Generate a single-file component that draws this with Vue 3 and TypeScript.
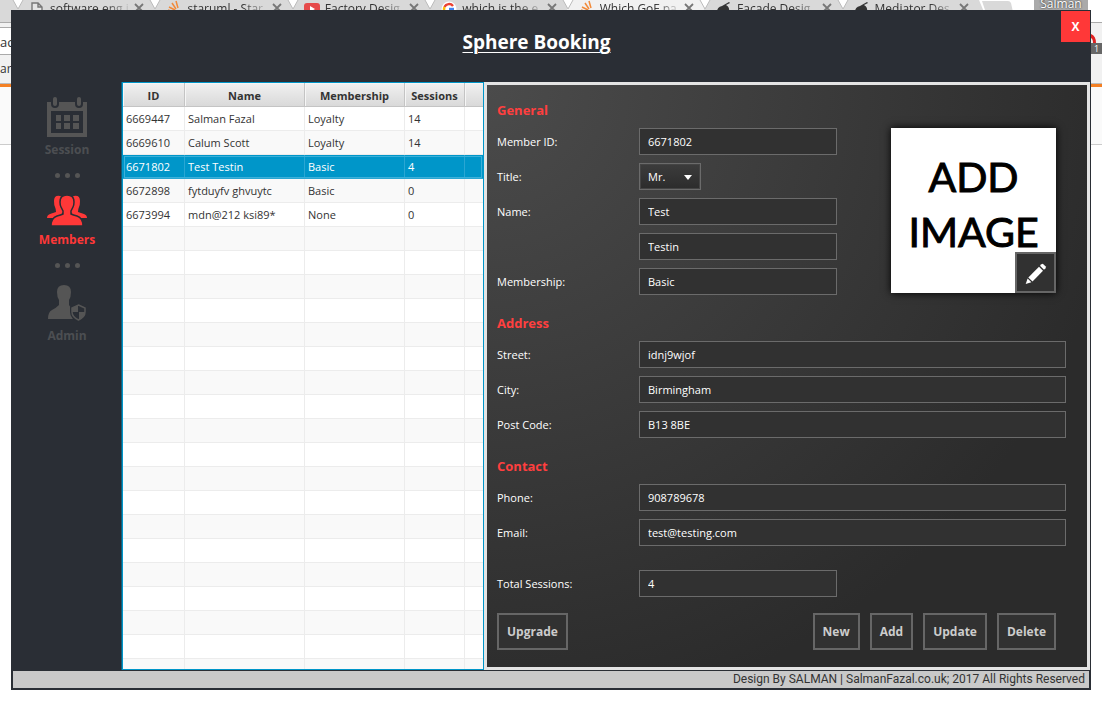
<script setup lang="ts">
import { computed, ref } from 'vue'

interface Member {
  id: string
  name: string
  membership: string
  sessions: number
}

interface BrowserTab {
  title: string
  icon: 'page' | 'stack' | 'video' | 'google' | 'bird'
  active?: boolean
}

const members: Member[] = [
  { id: '6669447', name: 'Salman Fazal', membership: 'Loyalty', sessions: 14 },
  { id: '6669610', name: 'Calum Scott', membership: 'Loyalty', sessions: 14 },
  { id: '6671802', name: 'Test Testin', membership: 'Basic', sessions: 4 },
  { id: '6672898', name: 'fytduyfv ghvuytc', membership: 'Basic', sessions: 0 },
  { id: '6673994', name: 'mdn@212 ksi89*', membership: 'None', sessions: 0 },
]

const tabs: BrowserTab[] = [
  { title: 'software eng i', icon: 'page' },
  { title: 'staruml - Star', icon: 'stack' },
  { title: 'Factory Desig', icon: 'video' },
  { title: 'which is the e', icon: 'google' },
  { title: 'Which GoF pa', icon: 'stack', active: true },
  { title: 'Facade Desig', icon: 'bird' },
  { title: 'Mediator Des', icon: 'bird' },
]

const MIN_ROWS = 24
const selectedId = ref('6671802')
const fillerRows = computed(() => Math.max(0, MIN_ROWS - members.length))

const form = ref({
  id: '6671802',
  title: 'Mr.',
  first: 'Test',
  last: 'Testin',
  membership: 'Basic',
  street: 'idnj9wjof',
  city: 'Birmingham',
  postCode: 'B13 8BE',
  phone: '908789678',
  email: 'test@testing.com',
  total: '4',
})
</script>

<template>
  <div class="desktop">
    <div class="browser" aria-hidden="true">
      <div class="tab-strip">
        <div class="tabs">
          <div v-for="tab in tabs" :key="tab.title" class="tab" :class="{ active: tab.active }">
            <svg class="tab-edge" viewBox="0 0 12 12"><path d="M1 0H11L6 9Z" fill="#fff" /><path d="M1 0L6 9L11 0" fill="none" stroke="#bbb" /></svg>
            <svg class="favicon" viewBox="0 0 16 16">
              <path v-if="tab.icon === 'page'" d="M3 3H9L13 7V16H3ZM9 3V7H13" fill="#e4e4e4" stroke="#777" stroke-width="1.4" />
              <path v-else-if="tab.icon === 'stack'" d="M2 10L8 12M3 7L9 10M6 3L10 9M10 1L12 8M3 14H9" fill="none" stroke="#f28a3a" stroke-width="1.5" />
              <template v-else-if="tab.icon === 'video'">
                <rect y="3" width="16" height="13" rx="3" fill="#e64b4b" />
                <path d="M6 6L11 9L6 12Z" fill="#fff" />
              </template>
              <template v-else-if="tab.icon === 'google'">
                <circle cx="8" cy="9" r="7.5" fill="#fff" />
                <path d="M3.5 7A5 5 0 0 1 12 6" fill="none" stroke="#ea4335" stroke-width="2.4" />
                <path d="M3.5 7A5 5 0 0 0 4 12" fill="none" stroke="#fbbc05" stroke-width="2.4" />
                <path d="M8 9H13" stroke="#4285f4" stroke-width="2.4" />
              </template>
              <path v-else d="M13 2L14 3L10 5Q14 7 13 12H8L7 10L6 12H1Q1 7 6 6Z" fill="#333" />
            </svg>
            <span class="tab-title">{{ tab.title }}</span>
            <svg class="tab-close" viewBox="0 0 10 10"><path d="M1 1L9 9M9 1L1 9" stroke="#777" stroke-width="1.8" /></svg>
          </div>
        </div>
        <svg class="tab-end" viewBox="0 0 34 12"><path d="M0 0L5 12H0ZM3 1H29Q31 1 32 3L34 12H9Q7 12 6 10Z" fill="#d9d9d9" /></svg>
        <span class="profile">Salman</span>
      </div>
      <div class="toolbar">
        <span class="address">ac</span>
        <span class="extension">
          <svg viewBox="0 0 11 10"><path d="M0 1Q5 3 5 10H2Q2 6 0 5Z" fill="#e02020" /></svg>
          <span class="badge">1</span>
        </span>
      </div>
      <div class="bookmarks">ark</div>
      <div class="site-line"></div>
      <div class="site-head"></div>
    </div>

    <main class="window">
      <header class="title-bar">
        <h1>Sphere Booking</h1>
        <button type="button" class="close" aria-label="Close">X</button>
      </header>

      <div class="body">
        <nav class="sidebar">
          <button type="button" class="nav-item">
            <svg width="40" height="40" viewBox="0 0 40 40" fill="currentColor">
              <path fill-rule="evenodd" d="M0 5H4V7Q4 11 8 11T12 7V5H28V7Q28 11 32 11T36 7V5H40V40H0ZM4 14V36H36V14Z" />
              <rect x="6" y="0" width="4" height="9" rx="2" />
              <rect x="30" y="0" width="4" height="9" rx="2" />
              <path d="M9 18H14V24H9ZM17 18H23V24H17ZM26 18H32V24H26ZM9 26H14V32H9ZM17 26H23V32H17ZM26 26H32V32H26Z" />
            </svg>
            <span>Session</span>
          </button>
          <span class="dots"><i></i><i></i><i></i></span>
          <button type="button" class="nav-item current">
            <svg width="40" height="31" viewBox="0 0 40 31" fill="currentColor">
              <path d="M13 1Q7 0 7 6Q7 10 8 12Q9 14 9 17L3 19Q0 20 0 23H12L18 14V3Z" />
              <path d="M27 1Q33 0 33 6Q33 10 32 12Q31 14 31 17L37 19Q40 20 40 23H28L22 14V3Z" />
              <path d="M20 0Q27 0 27 7Q27 10 26 12Q25 14 24 16V19Q26 20 30 21Q36 23 36 31H4Q4 23 10 21Q14 20 16 19V16Q15 14 14 12Q13 10 13 7Q13 0 20 0Z" stroke="#2a2e35" stroke-width="1.5" />
            </svg>
            <span>Members</span>
          </button>
          <span class="dots"><i></i><i></i><i></i></span>
          <button type="button" class="nav-item admin">
            <svg width="40" height="38" viewBox="0 0 40 38" fill="currentColor">
              <path d="M17 0Q24 0 24 7Q24 12 22 15V20Q24 22 24 25Q24 31 26 34H1Q1 27 5 25Q9 23 12 20V15Q10 12 10 7Q10 0 17 0Z" />
              <path d="M31 19L39 22V27Q39 33 31 37Q23 33 23 27V22Z" fill="#2a2e35" />
              <path d="M31.5 20L38 23V27Q38 32 31.5 35Q25 32 25 27V23Z" fill="none" stroke="currentColor" stroke-width="1.5" />
              <path d="M31 20V27H25V23ZM32 27H38Q38 32 32 35Z" />
            </svg>
            <span>Admin</span>
          </button>
        </nav>

        <section class="table-pane" aria-label="Member list">
          <table>
            <colgroup>
              <col class="c-id" /><col class="c-name" /><col class="c-membership" /><col class="c-sessions" /><col />
            </colgroup>
            <thead>
              <tr><th>ID</th><th>Name</th><th>Membership</th><th>Sessions</th><th></th></tr>
            </thead>
            <tbody>
              <tr v-for="m in members" :key="m.id" :class="{ selected: m.id === selectedId }" @click="selectedId = m.id">
                <td>{{ m.id }}</td><td>{{ m.name }}</td><td>{{ m.membership }}</td><td>{{ m.sessions }}</td><td></td>
              </tr>
              <tr v-for="n in fillerRows" :key="n"><td></td><td></td><td></td><td></td><td></td></tr>
            </tbody>
          </table>
        </section>

        <form class="details" @submit.prevent>
          <div class="general">
            <fieldset class="fields">
              <h2>General</h2>
              <label for="member-id">Member ID:</label>
              <input id="member-id" v-model="form.id" class="short" type="text" />
              <label for="title">Title:</label>
              <span class="select">
                <select id="title" v-model="form.title">
                  <option>Mr.</option>
                  <option>Mrs.</option>
                  <option>Miss</option>
                </select>
                <svg viewBox="0 0 8 5"><path d="M0 0H8L4 5Z" fill="#fff" /></svg>
              </span>
              <label for="first-name">Name:</label>
              <input id="first-name" v-model="form.first" class="short" type="text" />
              <span></span>
              <input id="last-name" v-model="form.last" class="short" type="text" aria-label="Last name" />
              <label for="membership">Membership:</label>
              <input id="membership" v-model="form.membership" class="short" type="text" />
            </fieldset>
            <div class="photo">
              <span>ADD<br />IMAGE</span>
              <button type="button" aria-label="Edit image">
                <svg width="24" height="24" viewBox="0 0 24 24" fill="#fff">
                  <path d="M15 5.7L19 9.7L8.5 20.5L4.3 16.5Z" />
                  <path d="M3.6 17.5L7.4 21.3L1.7 23Z" />
                  <path d="M16 4.7L17.5 3.2Q18.5 2.4 19.6 3.4L21.5 5.3Q22.3 6.3 21.5 7.2L20 8.7Z" />
                </svg>
              </button>
            </div>
          </div>

          <fieldset class="fields">
            <h2>Address</h2>
            <label for="street">Street:</label>
            <input id="street" v-model="form.street" type="text" />
            <label for="city">City:</label>
            <input id="city" v-model="form.city" type="text" />
            <label for="post-code">Post Code:</label>
            <input id="post-code" v-model="form.postCode" type="text" />
          </fieldset>

          <fieldset class="fields">
            <h2>Contact</h2>
            <label for="phone">Phone:</label>
            <input id="phone" v-model="form.phone" type="text" />
            <label for="email">Email:</label>
            <input id="email" v-model="form.email" type="text" />
          </fieldset>

          <div class="fields total">
            <label for="total">Total Sessions:</label>
            <input id="total" v-model="form.total" class="short" type="text" />
          </div>

          <div class="actions">
            <button type="button" class="upgrade">Upgrade</button>
            <button type="button">New</button>
            <button type="button">Add</button>
            <button type="button">Update</button>
            <button type="button">Delete</button>
          </div>
        </form>
      </div>

      <footer>Design By SALMAN | SalmanFazal.co.uk; 2017 All Rights Reserved</footer>
    </main>
  </div>
</template>

<style>
body {
  margin: 0;
  background: #fff;
}
</style>

<style scoped>
* {
  box-sizing: border-box;
}

.desktop {
  position: relative;
  display: flex;
  min-height: 100vh;
  padding: 10px 11px 12px;
  overflow: hidden;
  font-family: "Open Sans", "Noto Sans", sans-serif;
  font-size: 11px;
  line-height: 16px;
}

/* Browser behind the window */
.browser {
  position: absolute;
  inset: 0;
  color: #333;
}

.tab-strip {
  display: flex;
  height: 23px;
  border-bottom: 1px solid #aaa;
  background: linear-gradient(90deg, #d9d9d9 17px, #fff 17px);
}

.tabs {
  display: flex;
  flex: 1;
  min-width: 0;
  margin-left: 17px;
}

.tab {
  position: relative;
  display: flex;
  flex: 1;
  min-width: 0;
  padding-left: 12px;
  background: #d9d9d9;
}

.tab.active {
  background: #f1f1f1;
}

.tab-edge {
  position: absolute;
  left: -5px;
  top: 0;
  width: 12px;
  height: 12px;
}

.favicon {
  flex: none;
  width: 16px;
  height: 16px;
  margin-right: 5px;
}

.tab-title {
  flex: 1;
  min-width: 0;
  font-size: 12px;
  line-height: 18px;
  white-space: nowrap;
  mask-image: linear-gradient(90deg, #000 70%, transparent 105%);
}

.tab-close {
  flex: none;
  width: 10px;
  height: 10px;
  margin: 3px 10px 0 6px;
}

.tab-end {
  flex: none;
  width: 34px;
  height: 12px;
  margin-right: 21px;
}

.profile {
  flex: none;
  width: 54px;
  height: 22px;
  margin: -4px 14px 0 0;
  background: #aaa;
  color: #fff;
  font-size: 12px;
  text-align: center;
  text-shadow: 0 0 2px #000;
}

.toolbar {
  display: flex;
  justify-content: space-between;
  height: 33px;
  padding-top: 4px;
  background: #f1f1f1;
}

.address {
  width: 50%;
  height: 28px;
  border: 1px solid #aaa;
  border-left: 0;
  background: #fff;
  font-size: 13px;
  line-height: 28px;
}

.extension {
  width: 11px;
  padding-top: 6px;
}

.extension svg {
  display: block;
  width: 11px;
  height: 10px;
}

.badge {
  display: block;
  height: 11px;
  background: #666;
  color: #fff;
  font-size: 9px;
  line-height: 11px;
  text-align: center;
}

.bookmarks {
  height: 28px;
  border-bottom: 1px solid #bbb;
  background: #f1f1f1;
  font-size: 12px;
  line-height: 26px;
}

.site-line {
  height: 3px;
  background: #f48024;
}

.site-head {
  height: 58px;
  border-bottom: 1px solid #ccc;
  background: #fafafa;
}

/* Application window */
.window {
  position: relative;
  display: flex;
  flex: 1;
  flex-direction: column;
  min-width: 0;
  padding: 1px 1px 2px;
  background: #2a2e35;
}

.title-bar {
  display: flex;
  align-items: flex-start;
  height: 71px;
}

h1 {
  flex: 1;
  margin: 0;
  color: #fff;
  font-size: 19px;
  font-weight: 700;
  line-height: 62px;
  text-align: center;
  text-decoration: underline;
  text-decoration-thickness: 1px;
  text-underline-offset: 3px;
}

button {
  font: inherit;
  font-weight: 700;
  cursor: pointer;
}

.close {
  width: 29px;
  height: 31px;
  padding: 0;
  border: 0;
  background: #ff3838;
  color: #fff;
  font-size: 12px;
}

.body {
  display: grid;
  flex: 1;
  grid-template-columns: 110px 362px 1fr;
}

.sidebar {
  display: flex;
  flex-direction: column;
  align-items: center;
  padding-top: 15px;
}

.nav-item {
  display: flex;
  flex-direction: column;
  gap: 5px;
  align-items: center;
  padding: 0;
  border: 0;
  background: none;
  color: #555;
  font-size: 12px;
}

.nav-item span {
  color: #4c4e52;
}

.nav-item.current,
.nav-item.current span {
  color: #ff3838;
}

.nav-item.current {
  gap: 6px;
}

.dots {
  display: flex;
  gap: 5px;
  margin: 15px 0 17px;
}

.dots i {
  width: 5px;
  height: 5px;
  border-radius: 50%;
  background: #555;
}

.table-pane {
  overflow: hidden;
  border: 1px solid #0096c9;
  background: #fff;
  box-shadow: -1px 0 #0e5c7a;
  contain: size;
}

table {
  width: 100%;
  border-collapse: separate;
  border-spacing: 0;
  table-layout: fixed;
  color: #333;
}

.c-id {
  width: 62px;
}

.c-name {
  width: 120px;
}

.c-membership {
  width: 100px;
}

.c-sessions {
  width: 60px;
}

th,
td {
  height: 24px;
  padding: 0 3px;
  border-right: 1px solid #ececec;
  border-bottom: 1px solid #ececec;
  text-align: left;
  white-space: nowrap;
}

th {
  padding: 2px 0 0;
  border-color: #c4c4c4;
  background: linear-gradient(#f1f1f1, #d9d9d9);
  box-shadow: inset 1px 1px #f6f6f6;
  text-align: center;
}

th:last-child,
td:last-child {
  border-right: 0;
}

tbody tr:nth-child(even) {
  background: #f9f9f9;
}

tbody tr.selected {
  background: #0096c9;
  color: #fff;
  outline: 1px solid #3cb0d9;
  outline-offset: -2px;
}

tr.selected td {
  border-color: #2aa6d3;
}

/* Member form */
.details {
  min-width: 0;
  padding: 15px 21px 17px 10px;
  border: 3px solid #e4e4e4;
  background: radial-gradient(circle at top left, #4b4b4b, #2b2b2b 640px);
  color: #fff;
}

.general {
  display: flex;
  justify-content: space-between;
}

.fields {
  display: grid;
  grid-template-columns: 142px 1fr;
  row-gap: 8px;
  align-items: center;
  min-width: 0;
  margin: 0 0 18px;
  padding: 0;
  border: 0;
}

h2 {
  grid-column: 1 / -1;
  margin: 0;
  color: #ff3f3f;
  font-size: 13px;
  font-weight: 700;
  line-height: 20px;
}

input,
select {
  width: 100%;
  height: 27px;
  padding: 0 8px;
  border: 1px solid #6b6b6b;
  border-radius: 0;
  outline: 0;
  background: #313131;
  color: #fff;
  font: inherit;
}

input.short {
  width: 198px;
}

.select {
  position: relative;
  width: 62px;
}

select {
  display: block;
  appearance: none;
  background: linear-gradient(#3c3c3c, #2c2c2c);
  box-shadow: inset 0 0 0 1px #444;
}

.select svg {
  position: absolute;
  right: 9px;
  top: 12px;
  width: 8px;
  height: 5px;
  pointer-events: none;
}

.photo {
  position: relative;
  width: 165px;
  height: 165px;
  margin: 28px 10px 0 0;
  padding-top: 21px;
  background: #fff;
  box-shadow: 0 0 8px #000;
  color: #000;
  font-family: Lato, sans-serif;
  font-size: 41px;
  line-height: 55px;
  text-align: center;
  -webkit-text-stroke: 1px #000;
}

.photo button {
  position: absolute;
  right: 0;
  bottom: 0;
  display: grid;
  place-items: center;
  width: 41px;
  height: 41px;
  padding: 0;
  border: 2px solid #666;
  background: #313131;
}

.total {
  margin: 24px 0 16px;
}

.actions {
  display: flex;
  gap: 10px;
  margin-right: 10px;
}

.actions button {
  height: 37px;
  padding: 0 8px;
  border: 2px solid #666;
  background: #313131;
  color: #ccc;
  font-size: 12px;
}

.actions .upgrade {
  margin-right: auto;
}

footer {
  height: 18px;
  margin: 0 1px;
  padding-right: 4px;
  border-top: 1px solid #2a2e35;
  background: #c9c9c9;
  color: #333;
  font-family: Roboto, sans-serif;
  font-size: 12px;
  line-height: 17px;
  text-align: right;
}
</style>
